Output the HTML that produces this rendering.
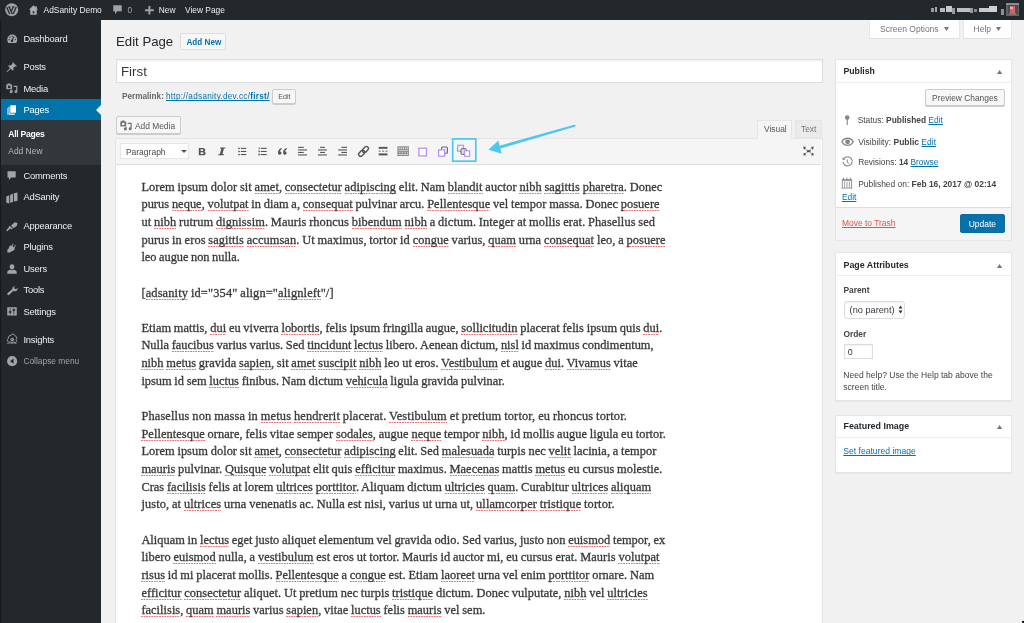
<!DOCTYPE html>
<html><head><meta charset="utf-8">
<style>
*{box-sizing:border-box;margin:0;padding:0}
html,body{width:1024px;height:623px;overflow:hidden;background:#f1f1f1;font-family:"Liberation Sans",sans-serif;color:#444}
.a{position:absolute;white-space:nowrap}
svg{position:absolute;overflow:visible}
#bar{position:absolute;left:0;top:0;width:1024px;height:20px;background:#23282d;color:#eee;font-size:8.4px}
#bar .a{top:0;line-height:20px}
#side{position:absolute;left:0;top:20px;width:101.4px;height:603px;background:#23282d}
.mi{position:absolute;left:0;width:101.4px;color:#eee;font-size:9px}
.mi .t{position:absolute;left:23.4px;white-space:nowrap}
.sub{position:absolute;left:0;top:120.2px;width:101.4px;height:44.6px;background:#32373c}
.btn{position:absolute;background:#f7f7f7;border:1px solid #ccc;border-radius:2px;box-shadow:0 1px 0 #ccc;color:#555;font-size:8.4px;white-space:nowrap}
.box{position:absolute;left:835px;width:176.5px;background:#fff;border:1px solid #e5e5e5;box-shadow:0 1px 1px rgba(0,0,0,.04)}
.box .hd{position:absolute;left:0;top:0;width:174.5px;border-bottom:1px solid #eee}
.box .ht{position:absolute;left:7.5px;font-size:8.9px;font-weight:bold;color:#23282d;white-space:nowrap}
.tri{position:absolute;width:0;height:0;border-left:2.6px solid transparent;border-right:2.6px solid transparent;border-bottom:3.9px solid #72777c}
a,.lk{color:#0073aa;text-decoration:underline}
#ed{position:absolute;left:115px;top:138px;width:707.5px;height:490px;border:1px solid #e5e5e5;background:#fff}
#tb{position:absolute;left:0;top:0;width:705px;height:26px;background:#f5f5f5;border-bottom:1px solid #ddd}
.ln{position:absolute;left:141.4px;white-space:pre;font-family:"Liberation Serif",serif;font-size:12.4px;color:#3a3a3a;-webkit-text-stroke:0.3px #3a3a3a}
.ln i{font-style:normal;background-image:linear-gradient(to right,#ee6a6a 0,#ee6a6a 1.6px,transparent 1.6px);background-size:2.6px 1.2px;background-repeat:repeat-x;background-position:0 100%;padding-bottom:0.2px}
</style></head><body><div id="root" style="position:absolute;left:0;top:0;width:1024px;height:623px;overflow:hidden;will-change:transform">
<!-- ADMIN BAR -->
<div id="bar">
  <svg style="left:4.7px;top:3.3px" width="13.4" height="13.4" viewBox="0 0 20 20"><circle cx="10" cy="10" r="9.8" fill="#9ea3a8"/><path d="M2.6 6.2 L7 16.5 M6.2 5.8 L10.8 16.5 M9.6 11.8 L12.6 5.2 M12.2 16.5 L16.8 5.6" stroke="#23282d" stroke-width="1.9" fill="none"/><path d="M4.2 5.9 H8.3 M10.6 5.8 H14" stroke="#23282d" stroke-width="1.3"/></svg>
  <svg style="left:28.8px;top:4.9px" width="9" height="10.2" viewBox="0 0 18 20.4"><path d="M9 0.5 L17.5 8.6 L16.3 9.8 L15.5 9.1 V19.5 H2.5 V9.1 L1.7 9.8 L0.5 8.6 Z" fill="#a8acb0"/><rect x="13.2" y="2" width="2.4" height="5" fill="#a8acb0"/><rect x="7.3" y="12.5" width="3.4" height="4.2" fill="#23282d"/></svg>
  <div class="a" style="left:43.6px">AdSanity Demo</div>
  <svg style="left:113px;top:5px" width="9" height="10" viewBox="0 0 18 20"><path d="M0.5 0.5 H17.5 V12.5 H8.5 L4 18.5 V12.5 H0.5 Z" fill="#9ea3a8"/></svg>
  <div class="a" style="left:127.6px;color:#a0a5aa">0</div>
  <svg style="left:144.8px;top:6.4px" width="8.8" height="8.4" viewBox="0 0 8.8 8.4"><path d="M3.4 0 H5.4 V3.2 H8.8 V5.2 H5.4 V8.4 H3.4 V5.2 H0 V3.2 H3.4 Z" fill="#9ea3a8"/></svg>
  <div class="a" style="left:158.8px">New</div>
  <div class="a" style="left:185px">View Page</div>
  <div style="position:absolute;left:930px;top:5px;width:70px;height:11px;filter:blur(0.6px)">
    <div style="position:absolute;left:1px;top:3px;width:3px;height:3.5px;background:#9a9a9a"></div>
    <div style="position:absolute;left:5px;top:1.5px;width:2px;height:5px;background:#a5a5a5"></div>
    <div style="position:absolute;left:10px;top:2.5px;width:5px;height:4.5px;background:#bbb"></div>
    <div style="position:absolute;left:16px;top:1px;width:6px;height:6px;background:#c8c8c8"></div>
    <div style="position:absolute;left:22px;top:3px;width:3px;height:6px;background:#9a9a9a"></div>
    <div style="position:absolute;left:27px;top:3px;width:13px;height:3.5px;background:#c0c0c0"></div>
    <div style="position:absolute;left:40px;top:3px;width:3px;height:5px;background:#999"></div>
    <div style="position:absolute;left:44px;top:4px;width:3px;height:3px;background:#888"></div>
    <div style="position:absolute;left:49px;top:3px;width:10px;height:4px;background:#c8c8c8"></div>
    <div style="position:absolute;left:59px;top:0.5px;width:8px;height:6px;background:#d0d0d0"></div>
  </div>
  <div style="position:absolute;left:1001px;top:9px;width:2.5px;height:6px;background:#909090;filter:blur(0.4px)"></div>
  <div style="position:absolute;left:1006.3px;top:3px;width:12.7px;height:12.7px;background:#5f6367"></div>
  <div style="position:absolute;left:1006.3px;top:3px;width:12.7px;height:1.5px;background:#8a8d90"></div>
  <div style="position:absolute;left:1007.5px;top:5px;width:10px;height:9px;background:#4a4e52"></div>
  <div style="position:absolute;left:1009.5px;top:5.5px;width:5px;height:7px;background:#c86a6a"></div>
  <div style="position:absolute;left:1010.3px;top:6.5px;width:3px;height:2.5px;background:#f0a8a8"></div>
  <div style="position:absolute;left:1009px;top:13px;width:7px;height:1.5px;background:#8c7070"></div>
</div>

<!-- SIDEBAR -->
<div id="side">
</div>
<div class="mi" style="top:28.5px;height:21.55px;"><div class="t" style="top:4.893px;line-height:11px;color:#eee;font-size:9.4px;letter-spacing:-0.2px">Dashboard</div></div>
<svg style="left:6.5px;top:34.3px" width="10.5" height="9.5" viewBox="0 0 20 18"><path d="M10 1 A9.5 9.5 0 0 0 0.5 10.5 A9.5 9.5 0 0 0 2.5 17 H17.5 A9.5 9.5 0 0 0 19.5 10.5 A9.5 9.5 0 0 0 10 1 Z" fill="#a0a5aa"/><path d="M9.2 12.5 L13.5 5" stroke="#23282d" stroke-width="2"/><circle cx="9.5" cy="13" r="2.3" fill="#23282d"/><circle cx="4" cy="10.5" r="1.2" fill="#23282d"/><circle cx="16" cy="10.5" r="1.2" fill="#23282d"/><circle cx="5.6" cy="6" r="1.2" fill="#23282d"/><circle cx="10" cy="4.3" r="1.2" fill="#23282d"/></svg>
<div class="mi" style="top:56.2px;height:21.55px;"><div class="t" style="top:5.193px;line-height:11px;color:#eee;font-size:9.4px;letter-spacing:-0.2px">Posts</div></div>
<svg style="left:6px;top:61.5px" width="11.3" height="10.5" viewBox="0 0 20 19"><path d="M12.5 0.5 L19.5 7.5 L18 8.5 L16.2 7.8 L13 11 L13.6 14.2 L12 15.8 L8.6 12.4 L1.5 18.5 L0.8 17.8 L7 10.8 L3.6 7.4 L5.2 5.8 L8.4 6.4 L11.6 3.2 L11 1.5 Z" fill="#a0a5aa"/></svg>
<div class="mi" style="top:77.75px;height:21.55px;"><div class="t" style="top:5.643px;line-height:11px;color:#eee;font-size:9.4px;letter-spacing:-0.2px">Media</div></div>
<svg style="left:6px;top:82.7px" width="12" height="10.5" viewBox="0 0 20 17.5"><path d="M0.5 2.5 H2.5 V1 H7.5 V2.5 H10 V10.5 H0.5 Z" fill="#a0a5aa"/><circle cx="5.3" cy="6.5" r="2.2" fill="#23282d"/><path d="M12.5 4.5 H19 V14.3 A2.4 2.4 0 1 1 17 12 V6.6 H12.5 Z M9.2 11.3 H11 V14.5 A2.4 2.4 0 1 1 9.2 12.2 Z" fill="#a0a5aa"/></svg>
<div class="mi" style="top:99.0px;height:21.2px;background:#0073aa;"><div class="t" style="top:5.393px;line-height:11px;color:#fff;font-size:9.4px;letter-spacing:-0.2px">Pages</div></div>
<svg style="left:7px;top:104.9px" width="9.5" height="10" viewBox="0 0 19 20"><path d="M6.5 0.5 H18 V15.5 H6.5 Z" fill="#fff"/><path d="M3 3.5 H5 V17 H15.5 V19.5 H3 Z" fill="#fff"/><path d="M0.5 6 H2 V19.5 H0.5Z" fill="#fff" opacity="0.7"/></svg>
<div class="mi" style="top:164.7px;height:21.55px;"><div class="t" style="top:5.693px;line-height:11px;color:#eee;font-size:9.4px;letter-spacing:-0.2px">Comments</div></div>
<svg style="left:7px;top:171.0px" width="9.2" height="9.8" viewBox="0 0 18 19"><path d="M1 0.5 H17 V12.5 H8 L3.8 18 V12.5 H1 Z" fill="#a0a5aa"/></svg>
<div class="mi" style="top:186.25px;height:21.55px;"><div class="t" style="top:5.143px;line-height:11px;color:#eee;font-size:9.4px;letter-spacing:-0.2px">AdSanity</div></div>
<svg style="left:6px;top:192.0px" width="11.8" height="12" viewBox="0 0 20 20"><path d="M0.5 7.5 L5.5 5.5 V19.5 L0.5 18 Z M7 5 L12 2.5 V16.5 L7 18.5 Z M13.5 2 L19.5 0.5 V14.5 L13.5 16 Z" fill="#a0a5aa"/></svg>
<div class="mi" style="top:214.7px;height:21.55px;"><div class="t" style="top:5.693px;line-height:11px;color:#eee;font-size:9.4px;letter-spacing:-0.2px">Appearance</div></div>
<svg style="left:6px;top:221.5px" width="11.8" height="9.4" viewBox="0 0 20 16"><path d="M8.5 6.5 L14.5 0.3 L19.7 1.8 L18.3 7 L12.5 10.5 Z" fill="#a0a5aa"/><path d="M7.5 7.5 L11.5 11.3 L9.6 12.6 L7.3 11 L2.3 15.8 L0.3 14.5 L4.3 9.2 L6.2 6.6 Z" fill="#a0a5aa"/></svg>
<div class="mi" style="top:236.25px;height:21.55px;"><div class="t" style="top:5.143px;line-height:11px;color:#eee;font-size:9.4px;letter-spacing:-0.2px">Plugins</div></div>
<svg style="left:6.5px;top:242.6px" width="10.5" height="9.8" viewBox="0 0 20 19"><path d="M11.5 1 L12.8 2 L10.2 6 L13 8 L15.8 4 L17 5 L14.5 9 A5 5 0 0 1 9.5 15.5 L6 18.5 H0.5 V13 L3.5 10 A5 5 0 0 1 9 5 Z" fill="#a0a5aa"/></svg>
<div class="mi" style="top:257.8px;height:21.55px;"><div class="t" style="top:5.593px;line-height:11px;color:#eee;font-size:9.4px;letter-spacing:-0.2px">Users</div></div>
<svg style="left:7.3px;top:263.6px" width="10" height="9.7" viewBox="0 0 20 19.5"><path d="M10 0.5 C13 0.5 14.7 2.8 14.7 5.5 C14.7 8.4 12.6 11 10 11 C7.4 11 5.3 8.4 5.3 5.5 C5.3 2.8 7 0.5 10 0.5Z" fill="#a0a5aa"/><path d="M0.5 19.5 V16.5 C0.5 13.5 4 11.8 6.8 11.5 C7.8 12.3 8.9 12.6 10 12.6 C11.1 12.6 12.2 12.3 13.2 11.5 C16 11.8 19.5 13.5 19.5 16.5 V19.5 Z" fill="#a0a5aa"/></svg>
<div class="mi" style="top:279.35px;height:21.55px;"><div class="t" style="top:5.043px;line-height:11px;color:#eee;font-size:9.4px;letter-spacing:-0.2px">Tools</div></div>
<svg style="left:6.5px;top:285.5px" width="10.8" height="9.2" viewBox="0 0 20 17"><path d="M15 0.3 A5.2 5.2 0 0 0 9.6 6.2 L1.2 13 A2.2 2.2 0 0 0 4.2 16.3 L11.8 8.6 A5.2 5.2 0 0 0 19.8 3.2 L16.8 5.8 L14 5.2 L13.2 2.5 Z" fill="#a0a5aa"/></svg>
<div class="mi" style="top:300.9px;height:21.55px;"><div class="t" style="top:5.493px;line-height:11px;color:#eee;font-size:9.4px;letter-spacing:-0.2px">Settings</div></div>
<svg style="left:7.3px;top:306.9px" width="10" height="8.8" viewBox="0 0 20 17.6"><rect x="0.5" y="0.5" width="19" height="16.6" fill="#a0a5aa"/><path d="M6.3 2.5 V15 M13.7 2.5 V15" stroke="#23282d" stroke-width="1.5"/><path d="M3.5 10 H9 M11 6 H16.5" stroke="#23282d" stroke-width="2.6"/></svg>
<div class="mi" style="top:328.8px;height:21.55px;"><div class="t" style="top:5.593px;line-height:11px;color:#eee;font-size:9.4px;letter-spacing:-0.2px">Insights</div></div>
<svg style="left:5.9px;top:333.4px" width="11.8" height="11.2" viewBox="0 0 20 19"><path d="M4.5 15.5 C1.5 14.5 1.5 10.5 4 9.5 C3.5 6 6 3.5 8.5 4 C9.5 1 14 1 15 4.5 C18 5 19 9 17 11 C19 13 18 16 15.5 16 Z" fill="none" stroke="#a0a5aa" stroke-width="1.6"/><circle cx="10.5" cy="11" r="3" fill="#a0a5aa"/><circle cx="10" cy="10.5" r="1" fill="#23282d"/><path d="M1.5 17.6 H18.5" stroke="#a0a5aa" stroke-width="1.4" stroke-dasharray="1.5 0.8"/></svg>
<div style="position:absolute;left:96.3px;top:104.5px;width:0;height:0;border-top:5.2px solid transparent;border-bottom:5.2px solid transparent;border-right:5.2px solid #f1f1f1"></div>
<div class="sub"></div>
<div class="a" style="left:8.3px;top:128.8px;font-size:8.6px;line-height:10px;color:#fff;font-weight:bold;letter-spacing:-0.29px">All Pages</div>
<div class="a" style="left:8.3px;top:146.3px;font-size:8.43px;line-height:10px;color:#b4b9be">Add New</div>
<svg style="left:6.7px;top:356.2px" width="10.3" height="10.3" viewBox="0 0 20 20"><circle cx="10" cy="10" r="9.8" fill="#a0a5aa"/><path d="M12.8 5 L5.8 10 L12.8 15 Z" fill="#23282d"/></svg>
<div class="a" style="left:23.4px;top:355.8px;font-size:8.4px;line-height:10px;color:#a0a5aa">Collapse menu</div>
<div style="position:absolute;left:0;top:20px;width:1px;height:603px;background:#181b1e"></div>


<!-- HEADER -->
<div class="a" style="left:116px;top:31.8px;font-size:13.2px;line-height:20px;color:#23282d">Edit Page</div>
<div class="btn" style="left:180px;top:33.4px;width:46px;height:16.3px;color:#0073aa;font-weight:bold;font-size:8.15px;line-height:14px;padding-top:1.4px;padding-left:5.5px;border-color:#ddd;box-shadow:none">Add New</div>

<!-- SCREEN OPTIONS -->
<div style="position:absolute;left:870px;top:20px;width:89px;height:18px;background:#fff;box-shadow:0 0 0 1px rgba(0,0,0,.04),0 1px 1px rgba(0,0,0,.04)"></div>
<div class="a" style="left:880px;top:24px;font-size:8.5px;line-height:10px;color:#72777c">Screen Options</div>
<svg style="left:943.6px;top:27px" width="5" height="4" viewBox="0 0 5 4"><path d="M0 0 L2.5 4 L5 0Z" fill="#72777c"/></svg>
<div style="position:absolute;left:963.5px;top:20px;width:47.5px;height:18px;background:#fff;box-shadow:0 0 0 1px rgba(0,0,0,.04),0 1px 1px rgba(0,0,0,.04)"></div>
<div class="a" style="left:973.6px;top:24px;font-size:8.5px;line-height:10px;color:#72777c">Help</div>
<svg style="left:995.9px;top:27px" width="5" height="4" viewBox="0 0 5 4"><path d="M0 0 L2.5 4 L5 0Z" fill="#72777c"/></svg>

<!-- TITLE -->
<div style="position:absolute;left:115.5px;top:59.3px;width:707px;height:23.5px;background:#fff;border:1px solid #ddd;box-shadow:inset 0 1px 2px rgba(0,0,0,.07)"></div>
<div class="a" style="left:121px;top:63.7px;font-size:13.3px;line-height:16px;color:#32373c">First</div>
<div class="a" style="left:122px;top:92.3px;font-size:8.2px;line-height:10px;color:#666;font-weight:bold">Permalink:</div>
<div class="a lk" style="left:166px;top:92.3px;font-size:8.2px;line-height:10px;letter-spacing:0.27px">http://adsanity.dev.cc/<b>first/</b></div>
<div class="btn" style="left:271.7px;top:88.7px;width:24px;height:15px;font-size:7.2px;line-height:13px;padding-left:5.5px">Edit</div>

<!-- ADD MEDIA -->
<div class="btn" style="left:115.5px;top:116.4px;width:65px;height:18px;line-height:17.6px;padding-top:0.6px;padding-left:18.5px">Add Media</div>
<svg style="left:120.3px;top:120.2px" width="12.2" height="10.8" viewBox="0 0 20 17.7"><path d="M0.5 2.5 H2.5 V1 H7.5 V2.5 H10.2 V10.8 H0.5 Z" fill="#72777c"/><circle cx="5.3" cy="6.6" r="2.1" fill="#f7f7f7"/><path d="M12.5 4.5 H19.2 V14.3 A2.5 2.5 0 1 1 17.2 11.9 V6.7 H12.5 Z M9.2 11.5 H11.2 V14.6 A2.5 2.5 0 1 1 9.2 12.2 Z" fill="#72777c"/></svg>

<!-- EDITOR -->
<div style="position:absolute;left:757.2px;top:120px;width:35px;height:19px;background:#f5f5f5;border:1px solid #e5e5e5;border-bottom:none"></div>
<div class="a" style="left:764px;top:124px;font-size:8.4px;line-height:10px;color:#555">Visual</div>
<div style="position:absolute;left:795.3px;top:120px;width:26.7px;height:18.4px;background:#ebebeb;border:1px solid #e5e5e5"></div>
<div class="a" style="left:801px;top:124px;font-size:8.4px;line-height:10px;color:#777">Text</div>
<div id="ed">
  <div id="tb"></div>
</div>
<div style="position:absolute;left:758.2px;top:137px;width:33px;height:2px;background:#f5f5f5"></div>
<!-- toolbar contents -->
<div style="position:absolute;left:119.6px;top:143.2px;width:69.8px;height:15.6px;background:#fff;border:1px solid #e6e6e6"></div>
<div class="a" style="left:125.9px;top:146.5px;font-size:8.5px;line-height:10px;color:#4a4a4a">Paragraph</div>
<div class="tri" style="left:180.5px;top:149.5px;transform:rotate(180deg);border-bottom-color:#555;border-left-width:3px;border-right-width:3px;border-bottom-width:3.5px"></div>
<svg style="left:0;top:0" width="1024" height="623" viewBox="0 0 1024 623">
 <g fill="#555">
  <!-- B -->
  <path d="M198.8 147.9 H202.6 C204.6 147.9 205.3 149 205.3 150 C205.3 150.9 204.8 151.4 204.1 151.6 C205 151.8 205.6 152.6 205.6 153.4 C205.6 154.5 204.8 155.3 202.9 155.3 H198.8 Z M200.6 149.2 V150.9 H202.3 C203 150.9 203.4 150.6 203.4 150.05 C203.4 149.5 203 149.2 202.3 149.2 Z M200.6 152.2 V154 H202.5 C203.3 154 203.7 153.65 203.7 153.1 C203.7 152.5 203.3 152.2 202.5 152.2 Z"/>
  <!-- I -->
  <path d="M220.2 147.4 H225.4 L225.2 148.5 H223.9 L222.5 154.1 H223.8 L223.6 155.2 H218.4 L218.6 154.1 H219.9 L221.3 148.5 H220 Z"/>
  <!-- ul -->
  <rect x="238.3" y="147.7" width="1.5" height="1.4"/><rect x="238.3" y="150.8" width="1.5" height="1.4"/><rect x="238.3" y="153.9" width="1.5" height="1.4"/>
  <rect x="240.8" y="147.8" width="5.5" height="1.1"/><rect x="240.8" y="150.9" width="5.5" height="1.1"/><rect x="240.8" y="154" width="5.5" height="1.1"/>
  <!-- ol -->
  <rect x="258.7" y="147.4" width="0.9" height="2"/><rect x="258.4" y="150.6" width="1.4" height="1.6"/><rect x="258.4" y="153.7" width="1.4" height="1.7"/>
  <rect x="260.8" y="147.8" width="5.9" height="1.1"/><rect x="260.8" y="150.9" width="5.9" height="1.1"/><rect x="260.8" y="154" width="5.9" height="1.1"/>
  <!-- quote -->
  <path d="M281.5 148 C279.3 148.8 278 150.3 278 152.5 C278 154 278.8 154.8 279.8 154.8 C280.8 154.8 281.5 154.1 281.5 153.1 C281.5 152.1 280.8 151.5 279.9 151.5 C280.2 150.3 281 149.4 282 148.9 Z M286.6 148 C284.4 148.8 283.1 150.3 283.1 152.5 C283.1 154 283.9 154.8 284.9 154.8 C285.9 154.8 286.6 154.1 286.6 153.1 C286.6 152.1 285.9 151.5 285 151.5 C285.3 150.3 286.1 149.4 287.1 148.9 Z"/>
  <!-- align left -->
  <rect x="298.1" y="146.8" width="5.6" height="1.1"/><rect x="298.1" y="149.4" width="8.9" height="1.1"/><rect x="298.1" y="151.9" width="5.6" height="1.1"/><rect x="298.1" y="154.4" width="8.9" height="1.1"/>
  <!-- align center -->
  <rect x="320.1" y="146.8" width="4.8" height="1.1"/><rect x="318" y="149.4" width="8.9" height="1.1"/><rect x="320.1" y="151.9" width="4.8" height="1.1"/><rect x="318" y="154.4" width="8.9" height="1.1"/>
  <!-- align right -->
  <rect x="341.4" y="146.8" width="5.6" height="1.1"/><rect x="338.1" y="149.4" width="8.9" height="1.1"/><rect x="341.4" y="151.9" width="5.6" height="1.1"/><rect x="338.1" y="154.4" width="8.9" height="1.1"/>
  <!-- readmore -->
  <rect x="378.7" y="146.9" width="8.8" height="1.9"/><rect x="378.7" y="153.4" width="8.8" height="2"/>
  <rect x="378.7" y="150.7" width="2" height="0.9"/><rect x="382.1" y="150.7" width="2" height="0.9"/><rect x="385.5" y="150.7" width="2" height="0.9"/>
 </g>
 <!-- link -->
 <g fill="none" stroke="#555" stroke-width="1.4" transform="rotate(-45 363.5 151.4)">
  <rect x="357.4" y="149.4" width="6.9" height="4" rx="2"/>
  <rect x="362.7" y="149.4" width="6.9" height="4" rx="2"/>
 </g>
<!-- kitchen sink -->
 <rect x="397.4" y="146.3" width="11.5" height="9.7" fill="#8a8a8a"/>
 <g fill="#e0e0e0">
  <rect x="398.4" y="147.4" width="1.3" height="1.8"/><rect x="400.6" y="147.4" width="1.3" height="1.8"/><rect x="402.8" y="147.4" width="1.3" height="1.8"/><rect x="405" y="147.4" width="1.3" height="1.8"/><rect x="407.1" y="147.4" width="1" height="1.8"/>
  <rect x="398.4" y="150.3" width="9.7" height="0.8"/>
  <rect x="399.2" y="152.2" width="1.2" height="1"/><rect x="401.8" y="152.2" width="1.2" height="1"/><rect x="404.4" y="152.2" width="1.2" height="1"/><rect x="407" y="152.2" width="1" height="1"/>
  <rect x="398.4" y="154.2" width="9.7" height="0.8"/>
 </g>
 <!-- purple square -->
 <rect x="418.8" y="148.2" width="7.6" height="7.7" fill="#fff" stroke="#b794f6" stroke-width="1.3"/>
 <!-- two squares -->
 <rect x="441.6" y="147" width="5.8" height="6.2" rx="1" fill="#f0f0f0" stroke="#666" stroke-width="1.1"/>
 <rect x="438.6" y="149.9" width="6" height="6.3" fill="#fff" stroke="#b794f6" stroke-width="1.3"/>
 <!-- third -->
 <rect x="457.7" y="145.3" width="5.8" height="5.9" fill="#f4f0fc" stroke="#b794f6" stroke-width="1.2"/>
 <rect x="461" y="148.7" width="5.2" height="5.6" rx="0.8" fill="#ddd" stroke="#666" stroke-width="1"/>
 <rect x="464.5" y="150.8" width="5.1" height="5.5" fill="#fff" stroke="#b794f6" stroke-width="1.2"/>
 <!-- highlight -->
 <rect x="452.7" y="138.9" width="23.1" height="22.3" fill="none" stroke="#4cc7ee" stroke-width="1.7"/>
 <!-- expand -->
 <g fill="#555">
  <path d="M803.4 146.6 L806.2 146.9 L805.4 147.8 L805.1 149.3 L803.7 149.2 Z"/>
  <path d="M813.6 146.6 L810.8 146.9 L811.6 147.8 L811.9 149.3 L813.3 149.2 Z"/>
  <path d="M803.4 155.6 L806.2 155.3 L805.4 154.4 L805.1 152.9 L803.7 153 Z"/>
  <path d="M813.6 155.6 L810.8 155.3 L811.6 154.4 L811.9 152.9 L813.3 153 Z"/>
  <rect x="806.9" y="150.1" width="3.6" height="2.1"/>
 </g>
 <path d="M805 148.3 L807.2 150.3 M811.9 148.3 L809.8 150.3 M805 153.9 L807.2 152 M811.9 153.9 L809.8 152" stroke="#777" stroke-width="0.7"/>
</svg>

<div class="ln" style="top:178.61px;line-height:17.62px;word-spacing:-0.400px;letter-spacing:0.055px">Lorem ipsum dolor sit <i>amet</i>, <i>consectetur</i> <i>adipiscing</i> elit. Nam <i>blandit</i> auctor <i>nibh</i> <i>sagittis</i> <i>pharetra</i>. Donec</div>
<div class="ln" style="top:196.25px;line-height:17.62px;word-spacing:-0.400px;letter-spacing:0.041px">purus <i>neque</i>, <i>volutpat</i> in diam a, <i>consequat</i> pulvinar arcu. <i>Pellentesque</i> vel tempor massa. Donec <i>posuere</i></div>
<div class="ln" style="top:213.91px;line-height:17.62px;word-spacing:-0.400px;letter-spacing:0.074px">ut <i>nibh</i> rutrum <i>dignissim</i>. Mauris rhoncus <i>bibendum</i> <i>nibh</i> a dictum. Integer at mollis erat. Phasellus sed</div>
<div class="ln" style="top:231.56px;line-height:17.62px;word-spacing:-0.400px;letter-spacing:0.072px">purus in eros <i>sagittis</i> <i>accumsan</i>. Ut maximus, tortor id <i>congue</i> varius, <i>quam</i> urna <i>consequat</i> leo, a <i>posuere</i></div>
<div class="ln" style="top:249.20px;line-height:17.62px;word-spacing:-0.400px;letter-spacing:-0.049px">leo augue non nulla.</div>
<div class="ln" style="top:284.50px;line-height:17.62px;word-spacing:-0.400px;letter-spacing:0.142px">[<i>adsanity</i> id="354" align="<i>alignleft</i>"/]</div>
<div class="ln" style="top:319.80px;line-height:17.62px;word-spacing:-0.400px;letter-spacing:0.032px">Etiam mattis, <i>dui</i> eu viverra <i>lobortis</i>, felis ipsum fringilla augue, <i>sollicitudin</i> placerat felis ipsum quis <i>dui</i>.</div>
<div class="ln" style="top:337.45px;line-height:17.62px;word-spacing:-0.400px;letter-spacing:0.015px">Nulla <i>faucibus</i> varius varius. Sed <i>tincidunt</i> <i>lectus</i> libero. Aenean dictum, <i>nisl</i> id maximus condimentum,</div>
<div class="ln" style="top:355.10px;line-height:17.62px;word-spacing:-0.400px;letter-spacing:0.038px"><i>nibh</i> <i>metus</i> gravida <i>sapien</i>, sit <i>amet</i> <i>suscipit</i> <i>nibh</i> leo ut eros. <i>Vestibulum</i> et augue <i>dui</i>. <i>Vivamus</i> vitae</div>
<div class="ln" style="top:372.75px;line-height:17.62px;word-spacing:-0.400px;letter-spacing:-0.003px">ipsum id sem <i>luctus</i> finibus. Nam dictum <i>vehicula</i> ligula gravida pulvinar.</div>
<div class="ln" style="top:408.05px;line-height:17.62px;word-spacing:-0.400px;letter-spacing:0.143px">Phasellus non massa in <i>metus</i> <i>hendrerit</i> placerat. <i>Vestibulum</i> et pretium tortor, eu rhoncus tortor.</div>
<div class="ln" style="top:425.70px;line-height:17.62px;word-spacing:-0.400px;letter-spacing:0.061px"><i>Pellentesque</i> ornare, felis vitae semper <i>sodales</i>, augue <i>neque</i> tempor <i>nibh</i>, id mollis augue ligula eu tortor.</div>
<div class="ln" style="top:443.35px;line-height:17.62px;word-spacing:-0.400px;letter-spacing:0.046px">Lorem ipsum dolor sit <i>amet</i>, <i>consectetur</i> <i>adipiscing</i> elit. Sed <i>malesuada</i> turpis nec <i>velit</i> lacinia, a tempor</div>
<div class="ln" style="top:461.00px;line-height:17.62px;word-spacing:-0.400px;letter-spacing:0.039px"><i>mauris</i> pulvinar. <i>Quisque</i> <i>volutpat</i> elit quis <i>efficitur</i> maximus. <i>Maecenas</i> mattis <i>metus</i> eu cursus molestie.</div>
<div class="ln" style="top:478.65px;line-height:17.62px;word-spacing:-0.400px;letter-spacing:0.030px">Cras <i>facilisis</i> felis at lorem <i>ultrices</i> <i>porttitor</i>. Aliquam dictum <i>ultricies</i> <i>quam</i>. Curabitur <i>ultrices</i> <i>aliquam</i></div>
<div class="ln" style="top:496.30px;line-height:17.62px;word-spacing:-0.400px;letter-spacing:0.097px">justo, at <i>ultrices</i> urna venenatis ac. Nulla est nisi, varius ut urna ut, <i>ullamcorper</i> <i>tristique</i> tortor.</div>
<div class="ln" style="top:531.60px;line-height:17.62px;word-spacing:-0.400px;letter-spacing:0.017px">Aliquam in <i>lectus</i> eget justo aliquet elementum vel gravida odio. Sed varius, justo non <i>euismod</i> tempor, ex</div>
<div class="ln" style="top:549.25px;line-height:17.62px;word-spacing:-0.400px;letter-spacing:0.059px">libero <i>euismod</i> nulla, a <i>vestibulum</i> est eros ut tortor. Mauris id auctor mi, eu cursus erat. Mauris <i>volutpat</i></div>
<div class="ln" style="top:566.90px;line-height:17.62px;word-spacing:-0.400px;letter-spacing:0.045px"><i>risus</i> id mi placerat mollis. <i>Pellentesque</i> a <i>congue</i> est. Etiam <i>laoreet</i> urna vel enim <i>porttitor</i> ornare. Nam</div>
<div class="ln" style="top:584.55px;line-height:17.62px;word-spacing:-0.400px;letter-spacing:0.048px"><i>efficitur</i> <i>consectetur</i> aliquet. Ut pretium nec turpis <i>tristique</i> dictum. Donec vulputate, <i>nibh</i> vel <i>ultricies</i></div>
<div class="ln" style="top:602.20px;line-height:17.62px;word-spacing:-0.400px;letter-spacing:0.030px"><i>facilisis</i>, <i>quam</i> <i>mauris</i> varius <i>sapien</i>, vitae <i>luctus</i> felis <i>mauris</i> vel sem.</div>

<!-- ARROW -->
<svg style="left:0;top:0" width="1024" height="623" viewBox="0 0 1024 623">
  <path d="M574.33 124.84 L499.59 145.66 L500.41 148.54 L574.87 126.76 Z" fill="#4cc7ee"/><circle cx="574.6" cy="125.8" r="1" fill="#4cc7ee"/>
  <path d="M488.5 149.8 L498.4 140.5 L501.7 153.7 Z" fill="#4cc7ee"/>
</svg>

<!-- RIGHT COLUMN: PUBLISH -->
<div class="box" style="top:59px;height:181px">
  <div class="hd" style="height:23px"></div>
  <div class="ht" style="top:6px;line-height:10px;font-size:8.7px">Publish</div>
  <svg style="left:161.2px;top:9.6px" width="5.2" height="4" viewBox="0 0 5.2 4"><path d="M0 4 L2.6 0 L5.2 4Z" fill="#72777c"/></svg>
  <div style="position:absolute;left:0;top:147px;width:174.5px;height:33px;background:#f5f5f5;border-top:1px solid #ddd"></div>
</div>
<div class="btn" style="left:924.5px;top:88.8px;width:80px;height:17.6px;line-height:16.6px;padding-top:0.6px;padding-left:6.6px">Preview Changes</div>
<div class="a" style="left:857.7px;top:115px;font-size:8.4px;line-height:10px;color:#444">Status: <b>Published</b> <span class="lk">Edit</span></div>
<div class="a" style="left:858.2px;top:136.5px;font-size:8.5px;line-height:10px;color:#444">Visibility: <b>Public</b> <span class="lk">Edit</span></div>
<div class="a" style="left:858.2px;top:157.4px;font-size:8.34px;line-height:10px;color:#444">Revisions: <b>14</b> <span class="lk">Browse</span></div>
<div class="a" style="left:858.2px;top:179px;font-size:8.44px;line-height:10px;color:#444">Published on: <b>Feb 16, 2017 @ 02:14</b></div>
<div class="a lk" style="left:841.9px;top:192.2px;font-size:8.44px;line-height:10px">Edit</div>
<svg style="left:0;top:0" width="1024" height="623" viewBox="0 0 1024 623">
 <g fill="#82878c">
  <circle cx="847.2" cy="117.6" r="2.3"/>
  <rect x="846.7" y="119" width="1.1" height="6"/>
  <path d="M841.2 141.8 C843.6 136.2 851.6 136.2 854 141.8 C851.6 147.4 843.6 147.4 841.2 141.8 Z M842.7 141.8 C844.8 145.6 850.4 145.6 852.5 141.8 C850.4 138 844.8 138 842.7 141.8 Z" fill-rule="evenodd"/>
</g>
 <circle cx="847.6" cy="141.8" r="2.4" fill="#82878c"/>
 <path d="M843 161.7 A4.6 4.6 0 1 0 844 158.4" fill="none" stroke="#82878c" stroke-width="1.1"/>
 <path d="M842.5 157 L842.7 160 L845.5 159.4 Z" fill="#82878c"/>
 <path d="M847.3 159.5 V162.2 L849.2 163.6" fill="none" stroke="#82878c" stroke-width="1"/>
 <g fill="#82878c">
  <rect x="841.8" y="179.2" width="10.3" height="1.6"/>
  <rect x="843" y="177.6" width="1" height="2"/><rect x="846.4" y="177.6" width="1" height="2"/><rect x="849.8" y="177.6" width="1" height="2"/>
  <rect x="841.8" y="180.8" width="0.9" height="7.6"/><rect x="851.2" y="180.8" width="0.9" height="7.6"/><rect x="841.8" y="187.6" width="10.3" height="0.9"/>
  <rect x="844.3" y="181.5" width="0.8" height="6"/><rect x="846.6" y="181.5" width="0.8" height="6"/><rect x="848.9" y="181.5" width="0.8" height="6"/>
 </g>
</svg>

<div class="a" style="left:842px;top:217.8px;font-size:8.45px;line-height:10px;color:#e64e46;text-decoration:underline">Move to Trash</div>
<div style="position:absolute;left:960.2px;top:214.2px;width:44.5px;height:19.3px;background:#0a72aa;border:1px solid #0a6ea3;border-radius:2px"></div>
<div class="a" style="left:968.7px;top:218.5px;font-size:8.5px;line-height:10px;color:#fff">Update</div>

<!-- PAGE ATTRIBUTES -->
<div class="box" style="top:252.2px;height:149px">
  <div class="hd" style="height:23px"></div>
  <div class="ht" style="top:6.5px;line-height:10px">Page Attributes</div>
  <svg style="left:161.2px;top:10.4px" width="5.2" height="4" viewBox="0 0 5.2 4"><path d="M0 4 L2.6 0 L5.2 4Z" fill="#72777c"/></svg>
</div>
<div class="a" style="left:843.4px;top:285px;font-size:8.4px;line-height:10px;font-weight:bold;color:#444">Parent</div>
<div style="position:absolute;left:844.4px;top:301.3px;width:61px;height:17.3px;background:#fff;border:1px solid #ddd;border-radius:3px;box-shadow:inset 0 1px 2px rgba(0,0,0,.07)"></div>
<div class="a" style="left:849.6px;top:305.3px;font-size:9.2px;line-height:10px;color:#32373c">(no parent)</div>
<svg style="left:898.4px;top:305px" width="5" height="9" viewBox="0 0 5 9"><path d="M0.5 3.6 L2.5 0.6 L4.5 3.6Z M0.5 5.4 L2.5 8.4 L4.5 5.4Z" fill="#333"/></svg>
<div class="a" style="left:843.4px;top:328.5px;font-size:8.4px;line-height:10px;font-weight:bold;color:#444">Order</div>
<div style="position:absolute;left:844.4px;top:344px;width:29px;height:15.3px;background:#fff;border:1px solid #ddd;box-shadow:inset 0 1px 2px rgba(0,0,0,.07)"></div>
<div class="a" style="left:847.8px;top:347px;font-size:8.8px;line-height:10px;color:#32373c">0</div>
<div class="a" style="left:843.3px;top:370px;font-size:8.54px;line-height:11.9px;color:#444">Need help? Use the Help tab above the<br>screen title.</div>

<!-- FEATURED IMAGE -->
<div class="box" style="top:414.5px;height:58px">
  <div class="hd" style="height:22px"></div>
  <div class="ht" style="top:5.6px;line-height:10px">Featured Image</div>
  <svg style="left:161.2px;top:9.9px" width="5.2" height="4" viewBox="0 0 5.2 4"><path d="M0 4 L2.6 0 L5.2 4Z" fill="#72777c"/></svg>
</div>
<div class="a lk" style="left:843.3px;top:446.3px;font-size:8.58px;line-height:10px">Set featured image</div>

<div style="position:absolute;left:1022px;top:621px;width:2px;height:2px;background:#1a1d22"></div>
<div style="position:absolute;left:1023px;top:619.5px;width:1px;height:1.5px;background:#c8c8c8"></div>
</div></body></html>
